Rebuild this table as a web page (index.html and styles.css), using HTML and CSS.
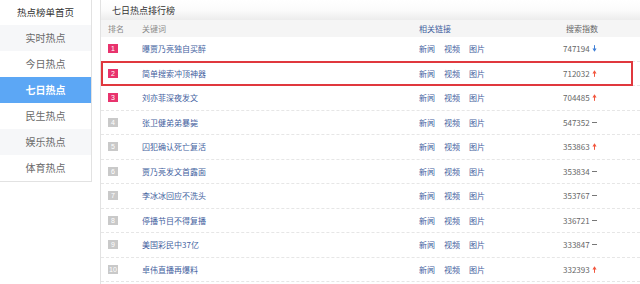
FILE: index.html
```html
<!DOCTYPE html>
<html lang="zh">
<head>
<meta charset="utf-8">
<link rel="stylesheet" href="styles.css">
</head>
<body>
<div class="page">
  <nav class="side">
    <div class="side-head">热点榜单首页</div>
    <div class="side-item alt">实时热点</div>
    <div class="side-item">今日热点</div>
    <div class="side-item active">七日热点</div>
    <div class="side-item">民生热点</div>
    <div class="side-item alt">娱乐热点</div>
    <div class="side-item">体育热点</div>
  </nav>
  <main class="main">
    <div class="title">七日热点排行榜</div>
    <div class="row head">
      <div class="c-rank">排名</div>
      <div class="c-kw">关键词</div>
      <div class="c-links center">相关链接</div>
      <div class="c-idx hpad">搜索指数</div>
    </div>
    <div class="row"><div class="c-rank"><span class="badge top">1</span></div><div class="c-kw link">曝贾乃亮独自买醉</div><div class="c-links"><span>新闻</span><span>视频</span><span>图片</span></div><div class="c-idx">747194<svg class="arr down" viewBox="0 0 6 8"><path d="M3 0v5"/><polygon points="0.5,4 5.5,4 3,8"/></svg></div></div>
    <div class="row mark"><div class="c-rank"><span class="badge top">2</span></div><div class="c-kw link">简单搜索冲顶神器</div><div class="c-links"><span>新闻</span><span>视频</span><span>图片</span></div><div class="c-idx">712032<svg class="arr up" viewBox="0 0 6 8"><path d="M3 3v5"/><polygon points="0.5,4 5.5,4 3,0"/></svg></div></div>
    <div class="row"><div class="c-rank"><span class="badge top">3</span></div><div class="c-kw link">刘亦菲深夜发文</div><div class="c-links"><span>新闻</span><span>视频</span><span>图片</span></div><div class="c-idx">704485<svg class="arr up" viewBox="0 0 6 8"><path d="M3 3v5"/><polygon points="0.5,4 5.5,4 3,0"/></svg></div></div>
    <div class="row"><div class="c-rank"><span class="badge">4</span></div><div class="c-kw link">张卫健弟弟暴毙</div><div class="c-links"><span>新闻</span><span>视频</span><span>图片</span></div><div class="c-idx">547352<i class="dash"></i></div></div>
    <div class="row"><div class="c-rank"><span class="badge">5</span></div><div class="c-kw link">囚犯确认死亡复活</div><div class="c-links"><span>新闻</span><span>视频</span><span>图片</span></div><div class="c-idx">353863<svg class="arr up" viewBox="0 0 6 8"><path d="M3 3v5"/><polygon points="0.5,4 5.5,4 3,0"/></svg></div></div>
    <div class="row"><div class="c-rank"><span class="badge">6</span></div><div class="c-kw link">贾乃亮发文首露面</div><div class="c-links"><span>新闻</span><span>视频</span><span>图片</span></div><div class="c-idx">353834<i class="dash"></i></div></div>
    <div class="row"><div class="c-rank"><span class="badge">7</span></div><div class="c-kw link">李冰冰回应不洗头</div><div class="c-links"><span>新闻</span><span>视频</span><span>图片</span></div><div class="c-idx">353767<i class="dash"></i></div></div>
    <div class="row"><div class="c-rank"><span class="badge">8</span></div><div class="c-kw link">停播节目不得复播</div><div class="c-links"><span>新闻</span><span>视频</span><span>图片</span></div><div class="c-idx">336721<i class="dash"></i></div></div>
    <div class="row"><div class="c-rank"><span class="badge">9</span></div><div class="c-kw link">美国彩民中37亿</div><div class="c-links"><span>新闻</span><span>视频</span><span>图片</span></div><div class="c-idx">333847<i class="dash"></i></div></div>
    <div class="row"><div class="c-rank"><span class="badge">10</span></div><div class="c-kw link">卓伟直播再爆料</div><div class="c-links"><span>新闻</span><span>视频</span><span>图片</span></div><div class="c-idx">332393<svg class="arr up" viewBox="0 0 6 8"><path d="M3 3v5"/><polygon points="0.5,4 5.5,4 3,0"/></svg></div></div>
  </main>
</div>
</body>
</html>
```
FILE: styles.css
```css
html, body {
  margin: 0;
  padding: 0;
  background: #fff;
  width: 640px;
  height: 284px;
  overflow: hidden;
}
body {
  font-family: "Noto Sans CJK SC", "Noto Sans", sans-serif;
  color: #555;
}
.page {
  display: flex;
  align-items: flex-start;
  gap: 8px;
}
.side {
  width: 92px;
  flex: none;
  border-right: 1px solid #e2e2e2;
  border-bottom: 1px solid #e2e2e2;
  box-sizing: border-box;
}
.side-head {
  height: 25px;
  line-height: 25px;
  text-align: center;
  font-size: 9.5px;
  color: #333;
}
.side-item {
  height: 26px;
  line-height: 26px;
  text-align: center;
  font-size: 10px;
  color: #6a6a6a;
  background: #fff;
}
.side-item.alt { background: #f6f7f9; }
.side-item.active {
  background: #5ca7f5;
  color: #fff;
  font-weight: bold;
}
.main {
  flex: 1;
  border-left: 1px solid #e2e2e2;
  min-height: 284px;
}
.title {
  height: 20px;
  line-height: 22px;
  padding-left: 11px;
  font-size: 9px;
  color: #333;
  background: linear-gradient(#fff, #fbfbfb 50%, #ececec);
}
.row {
  position: relative;
  display: grid;
  grid-template-columns: 41px 277px 144px 1fr;
  align-items: center;
  height: 24.5px;
  font-size: 8px;
  border-bottom: 1px dashed #e6e6e6;
  box-sizing: border-box;
}
.row.head {
  height: 17px;
  background: #f5f5f5;
  color: #8a8a8a;
  border-bottom: none;
}
.c-rank { padding-left: 7px; display: flex; align-items: center; }
.center { text-align: center; padding-right: 10px; }
.hpad { padding-left: 3px; }
.link { color: #4361a0; }
.c-links {
  display: flex;
  gap: 9px;
  color: #4361a0;
}
.c-idx {
  color: #666;
  display: flex;
  align-items: center;
  gap: 2px;
}
.badge {
  display: inline-block;
  min-width: 10px;
  height: 9px;
  line-height: 9px;
  padding: 0 1px;
  box-sizing: border-box;
  text-align: center;
  font-size: 7px;
  font-family: "Liberation Sans", sans-serif;
  color: #fff;
  background: #c9c9c9;
}
.badge.top { background: #e8336d; }
.arr { width: 5px; height: 7px; }
.arr path { stroke-width: 1.2; fill: none; }
.arr.down path { stroke: #3f7fd6; }
.arr.down polygon { fill: #3f7fd6; }
.arr.up path { stroke: #f2553c; }
.arr.up polygon { fill: #f2553c; }
.dash {
  display: inline-block;
  width: 5px;
  height: 1px;
  background: #777;
}
.row.mark::after {
  content: "";
  position: absolute;
  left: 0;
  right: 7px;
  top: -1px;
  bottom: -1px;
  border: 2px solid #e0383e;
  pointer-events: none;
}
```
